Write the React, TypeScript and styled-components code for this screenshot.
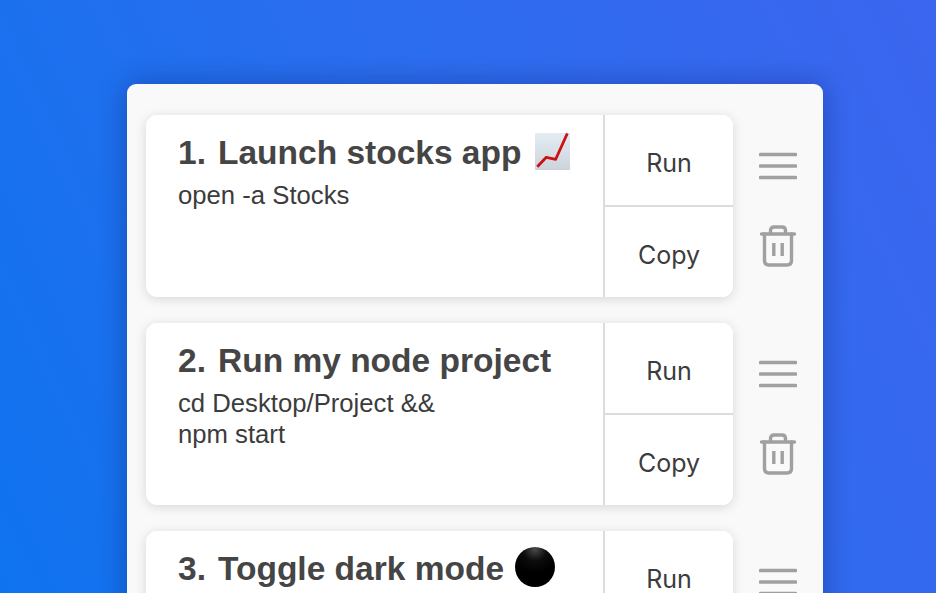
import React from 'react';
import styled, { createGlobalStyle } from 'styled-components';

const GlobalStyle = createGlobalStyle`
  html, body {
    margin: 0;
    height: 593px;
    overflow: hidden;
  }
  body {
    font-family: "Liberation Sans", Arial, sans-serif;
  }
`;

const Page = styled.div`
  height: 593px;
  overflow: hidden;
  box-sizing: border-box;
  padding: 84px 113px 0 127px;
  background: linear-gradient(245deg, #3c66ef 0%, #2a6dee 50%, #0f73ef 100%);
`;

const Panel = styled.div`
  background: #f9f9f9;
  border-radius: 9px 9px 0 0;
  box-shadow: 0 0 28px rgba(0, 10, 60, 0.32);
  padding: 31px 0 0 19px;
  height: 600px;
  box-sizing: border-box;
  display: flex;
  flex-direction: column;
  gap: 26px;
`;

const Row = styled.div`
  display: flex;
  align-items: stretch;
  flex-shrink: 0;
`;

const Card = styled.div`
  width: 587px;
  height: 182px;
  flex-shrink: 0;
  background: #fff;
  border-radius: 11px;
  box-shadow: 0 2px 12px rgba(0, 0, 0, 0.14);
  display: flex;
  overflow: hidden;
`;

const Body = styled.div`
  flex: 1;
  box-sizing: border-box;
  padding: 18px 0 0 32px;
  min-width: 0;
`;

const Title = styled.div`
  display: flex;
  align-items: center;
  height: 40px;
  font-size: 33.5px;
  font-weight: 700;
  color: #454545;
  white-space: nowrap;
`;

const Number = styled.span`
  width: 40px;
  flex-shrink: 0;
`;

const Emoji = styled.svg<{ $gap: number; $lift: number }>`
  margin-left: ${(p) => p.$gap}px;
  margin-top: ${(p) => -p.$lift}px;
  flex-shrink: 0;
`;

const Command = styled.div`
  margin-top: 7px;
  font-size: 25.7px;
  line-height: 31px;
  color: #3c3c3c;
`;

const Actions = styled.div`
  width: 130px;
  flex-shrink: 0;
  display: flex;
  flex-direction: column;
  border-left: 2px solid #dcdcdc;
  box-sizing: border-box;
`;

const Action = styled.button<{ $divided?: boolean }>`
  flex: 1;
  border: 0;
  border-top: ${(p) => (p.$divided ? '2px solid #dcdcdc' : '0')};
  background: #fff;
  padding: 6px 0 0;
  font-family: Inter, "Liberation Sans", sans-serif;
  font-size: 25px;
  color: #3c3c3c;
`;

const Tools = styled.div`
  width: 90px;
  flex-shrink: 0;
  display: flex;
  flex-direction: column;
  align-items: center;
  padding-top: 37px;
  gap: 45px;
`;

const ToolIcon = styled.svg`
  display: block;
  color: #a0a0a0;
`;

const ChartEmoji = () => (
  <Emoji $gap={14} $lift={3} width="35" height="37" viewBox="0 0 35 37">
    <defs>
      <linearGradient id="chartBg" x1="0" y1="0" x2="0" y2="1">
        <stop offset="0" stopColor="#e4edf4" />
        <stop offset="1" stopColor="#cdd3da" />
      </linearGradient>
    </defs>
    <rect width="35" height="37" fill="url(#chartBg)" />
    <path d="M2.3 33.7 L11.3 24.3 L20.7 26.3 L32.3 0.5" fill="none" stroke="#cc1111" strokeWidth="2.8" strokeLinejoin="round" />
  </Emoji>
);

const MoonEmoji = () => (
  <Emoji $gap={11} $lift={4} width="40" height="40" viewBox="0 0 40 40">
    <defs>
      <radialGradient id="moonBg" cx="0.5" cy="0.05" r="0.6">
        <stop offset="0" stopColor="#4a4a4a" />
        <stop offset="0.5" stopColor="#0c0c0c" />
        <stop offset="1" stopColor="#000" />
      </radialGradient>
    </defs>
    <circle cx="20" cy="20" r="20" fill="url(#moonBg)" />
  </Emoji>
);

const MenuIcon = () => (
  <ToolIcon width="38" height="28" viewBox="0 0 38 28">
    <path d="M1.5 2.5H36.5M1.5 14H36.5M1.5 25.5H36.5" stroke="currentColor" strokeWidth="3.6" strokeLinecap="round" />
  </ToolIcon>
);

const TrashIcon = () => (
  <ToolIcon width="38" height="42" viewBox="0 0 38 42" fill="none" stroke="currentColor" strokeWidth="3.4" strokeLinecap="round" strokeLinejoin="round">
    <path d="M2.5 9H35.5" />
    <path d="M11.5 8V5.5Q11.5 2 15 2H23Q26.5 2 26.5 5.5V8" />
    <path d="M5.5 9V35.5Q5.5 40 10 40H28Q32.5 40 32.5 35.5V9" />
    <path d="M14.8 18V31M23.2 18V31" strokeLinecap="butt" />
  </ToolIcon>
);

const items = [
  { id: 1, title: 'Launch stocks app', lines: ['open -a Stocks'], emoji: <ChartEmoji /> },
  { id: 2, title: 'Run my node project', lines: ['cd Desktop/Project &&', 'npm start'] },
  { id: 3, title: 'Toggle dark mode', lines: [], emoji: <MoonEmoji /> },
];

const App: React.FC = () => (
  <Page>
    <GlobalStyle />
    <Panel>
      {items.map((item) => (
        <Row key={item.id}>
          <Card>
            <Body>
              <Title>
                <Number>{item.id}.</Number>
                {item.title}
                {item.emoji}
              </Title>
              <Command>
                {item.lines.map((line) => (
                  <div key={line}>{line}</div>
                ))}
              </Command>
            </Body>
            <Actions>
              <Action>Run</Action>
              <Action $divided>Copy</Action>
            </Actions>
          </Card>
          <Tools>
            <MenuIcon />
            <TrashIcon />
          </Tools>
        </Row>
      ))}
    </Panel>
  </Page>
);

export default App;
